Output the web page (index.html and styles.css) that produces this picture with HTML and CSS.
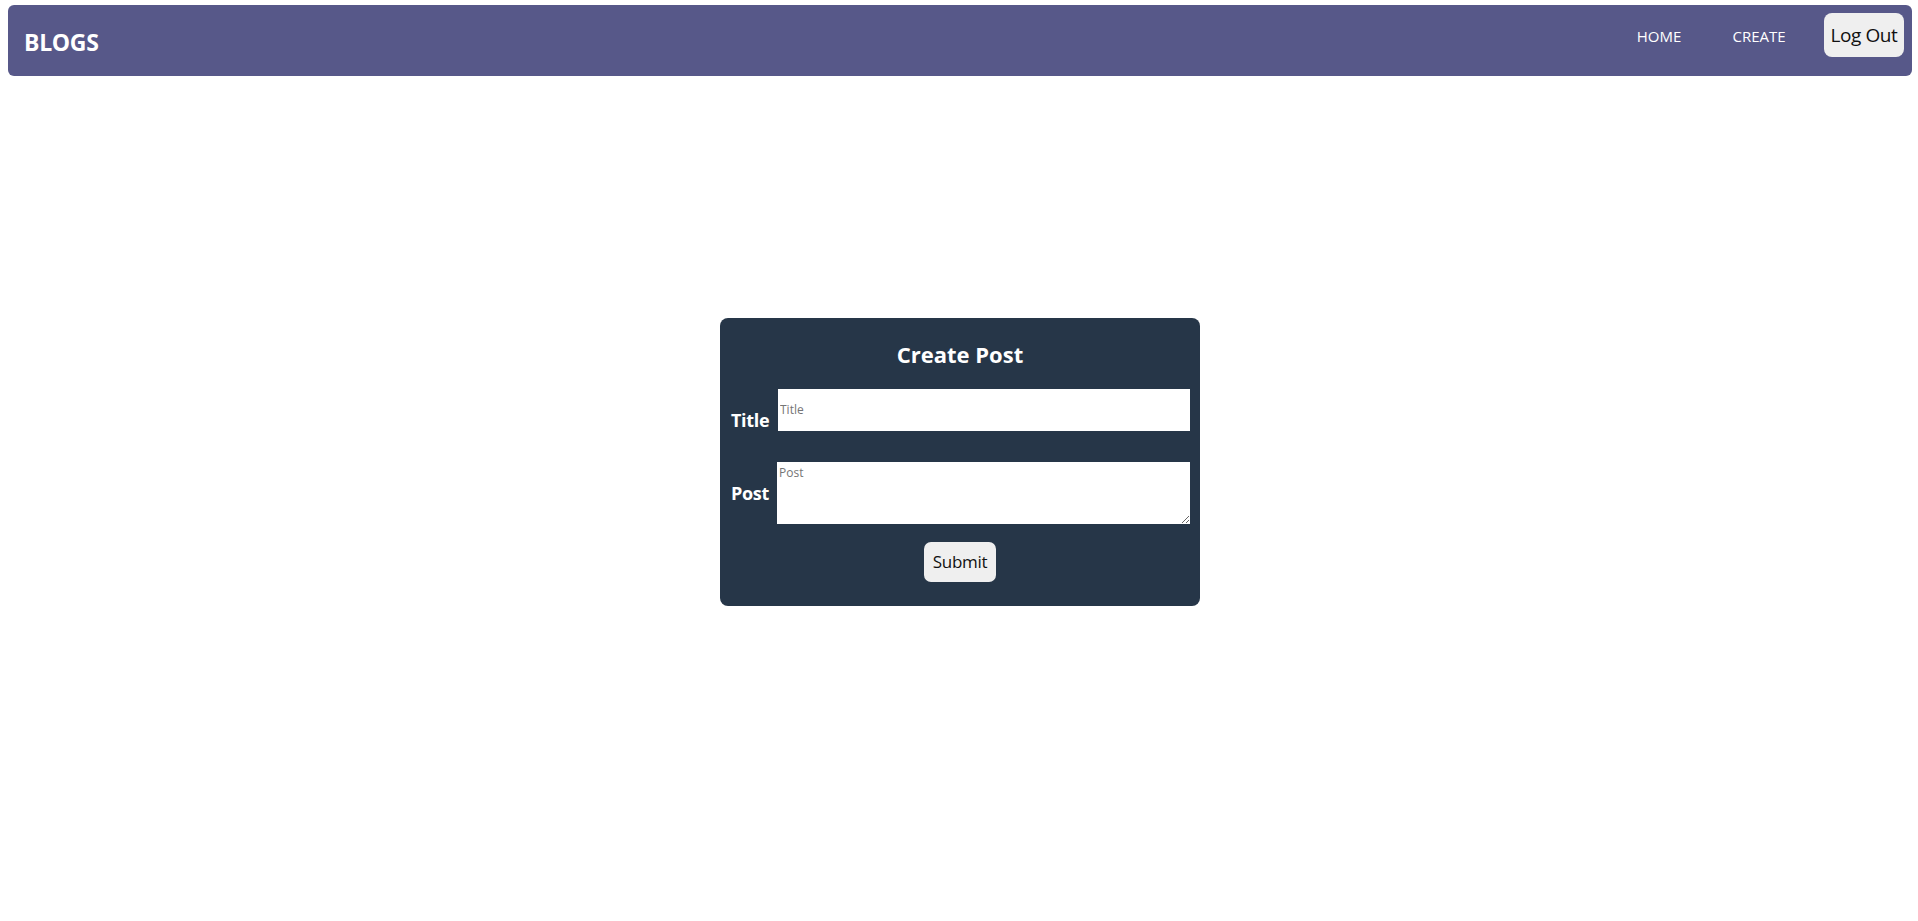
FILE: index.html
```html
<!DOCTYPE html>
<html lang="en">
<head>
<meta charset="utf-8">
<title>Blogs - Create Post</title>
<link rel="stylesheet" href="styles.css">
</head>
<body>
<div class="page">
  <nav class="navbar">
    <div class="brand">BLOGS</div>
    <div class="nav-right">
      <a class="nav-link" href="#">HOME</a>
      <a class="nav-link" href="#">CREATE</a>
      <button class="logout" type="button">Log Out</button>
    </div>
  </nav>
  <main class="main">
    <form class="card">
      <h2 class="card-title">Create Post</h2>
      <div class="row row-title">
        <label class="label" for="title">Title</label>
        <input class="field" id="title" type="text" placeholder="Title">
      </div>
      <div class="row row-post">
        <label class="label" for="post">Post</label>
        <textarea class="field area" id="post" placeholder="Post"></textarea>
      </div>
      <div class="actions">
        <button class="submit" type="button">Submit</button>
      </div>
    </form>
  </main>
</div>
</body>
</html>
```
FILE: styles.css
```css
* { box-sizing: border-box; }

html, body {
  margin: 0;
  padding: 0;
  background: #ffffff;
  font-family: "Open Sans", "Noto Sans", sans-serif;
}

.page {
  height: 100vh;
  display: flex;
  flex-direction: column;
}

.navbar {
  margin: 5px 6px 0 8px;
  height: 71px;
  background: #575889;
  border-radius: 6px;
  display: flex;
  align-items: flex-start;
  justify-content: space-between;
  padding: 0 8px 0 16px;
  flex-shrink: 0;
}

.brand {
  color: #ffffff;
  font-weight: 700;
  font-size: 23px;
  line-height: 32px;
  margin-top: 21px;
  letter-spacing: -0.3px;
}

.nav-right {
  display: flex;
  align-items: baseline;
  padding-top: 8px;
}

.nav-link {
  width: 90px;
  text-align: center;
  color: #ffffff;
  text-decoration: none;
  font-size: 15px;
  margin-right: 10px;
}

.nav-link:last-of-type {
  margin-right: 20px;
}

.logout {
  height: 44px;
  width: 80px;
  padding: 0;
  border: none;
  border-radius: 8px;
  background: #efefef;
  color: #111111;
  font-family: "Open Sans", "Noto Sans", sans-serif;
  font-size: 19px;
  letter-spacing: -0.4px;
}

.main {
  flex: 1;
  display: flex;
  align-items: center;
  justify-content: center;
  padding-bottom: 74px;
  padding-left: 2px;
}

.card {
  width: 480px;
  background: #263648;
  border-radius: 8px;
  padding: 10px;
  display: flex;
  flex-direction: column;
}

.card-title {
  margin: 10px 0 0;
  text-align: center;
  color: #ffffff;
  font-size: 22px;
  line-height: 32px;
  font-weight: 700;
}

.row {
  display: grid;
  grid-template-columns: 38px 1fr;
  column-gap: 10px;
}

.row-title {
  margin-top: 19px;
  align-items: end;
}

.row-post {
  margin-top: 31px;
  align-items: center;
}

.label {
  color: #ffffff;
  font-weight: 700;
  font-size: 18px;
  line-height: 24px;
  margin-left: 1px;
  letter-spacing: -0.3px;
}

.row-title .label {
  margin-bottom: -1px;
}

.field {
  border: none;
  outline: none;
  background: #ffffff;
  font-family: "Open Sans", "Noto Sans", sans-serif;
  font-size: 12px;
  color: #222;
  width: 100%;
}

.row-title .field {
  height: 42px;
  padding: 0 2px;
}

.area {
  height: 62px;
  padding: 2px;
  resize: vertical;
  margin-left: -1px;
  width: calc(100% + 1px);
  display: block;
}

.field::placeholder {
  color: #757575;
}

.actions {
  display: flex;
  justify-content: center;
  margin-top: 18px;
  margin-bottom: 14px;
}

.submit {
  width: 72px;
  height: 40px;
  padding: 0;
  border: none;
  border-radius: 7px;
  background: #efefef;
  color: #111111;
  font-family: "Open Sans", "Noto Sans", sans-serif;
  font-size: 17px;
  letter-spacing: -0.3px;
}
```
